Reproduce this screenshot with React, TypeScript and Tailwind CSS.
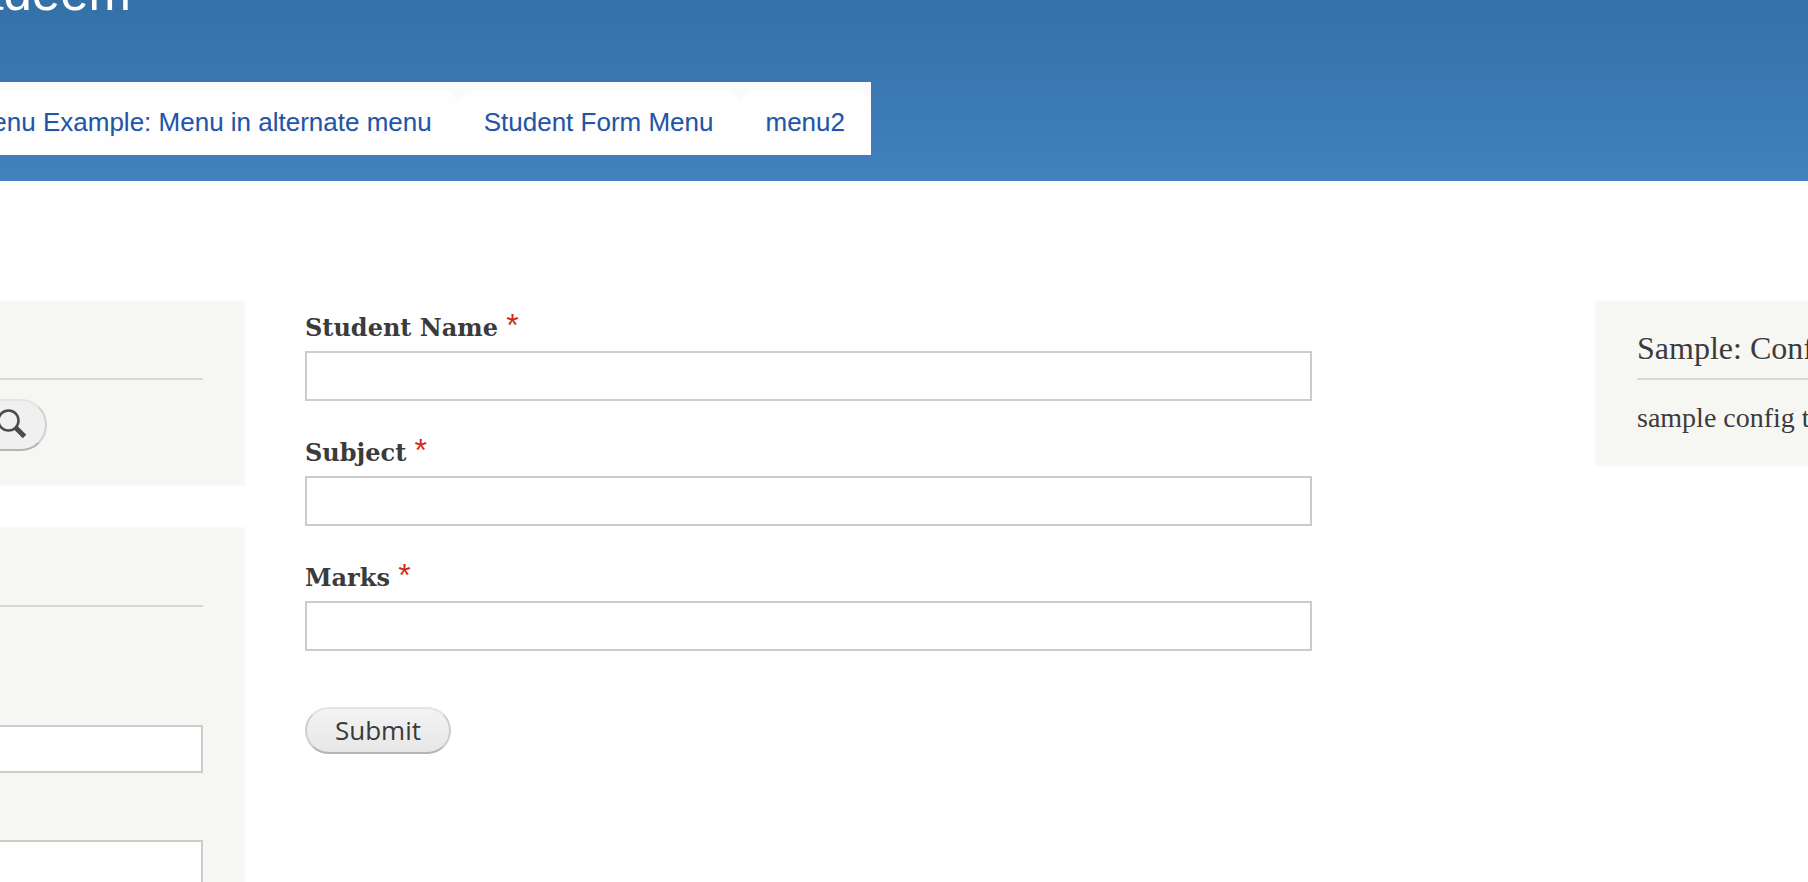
import type { FormEvent } from "react";

const fields = [
  { id: "student-name", label: "Student Name" },
  { id: "subject", label: "Subject" },
  { id: "marks", label: "Marks" },
];

const menu = [
  "Menu Example: Menu in alternate menu",
  "Student Form Menu",
  "menu2",
];

function Header() {
  return (
    <header className="h-[181px] overflow-hidden bg-linear-to-b from-[#3570a8] to-[#4081be] font-['Liberation_Sans',Arial,sans-serif]">
      <div className="flex h-[82px] w-[131px] items-start justify-end">
        <a href="#" className="-mt-9 text-[51px] leading-[58px] text-white">
          adeem
        </a>
      </div>
      <nav className="flex w-[871px] justify-end bg-[#fafafa] pt-2">
        {menu.map((item) => (
          <a
            key={item}
            href="#"
            className="h-[65px] shrink-0 rounded-t-2xl bg-[#fefefe] px-[26px] text-[26px] leading-[65px] whitespace-nowrap text-[#2255a4] [text-shadow:0_1px_1px_#eef]"
          >
            {item}
          </a>
        ))}
      </nav>
    </header>
  );
}

function SearchIcon() {
  return (
    <svg width="30" height="32" viewBox="0 0 30 32" fill="none" aria-hidden="true">
      <circle cx="9.5" cy="11.5" r="10" stroke="#4b4b4b" strokeWidth="2.5" />
      <path d="M16.500 18.500l9 9" stroke="#4b4b4b" strokeWidth="5" />
    </svg>
  );
}

function LeftSidebar() {
  return (
    <aside className="w-[245px] shrink-0 space-y-[41px] overflow-hidden">
      <section className="h-[186px] border-2 border-l-0 border-[#f9f9f9] bg-[#f6f6f2] pr-10">
        <div className="h-[78px] border-b-2 border-[#d6d6d6]" />
        <button
          type="button"
          aria-label="Search"
          className="mt-[19px] -ml-7 flex h-[52px] w-[75px] items-center justify-end rounded-full border-2 border-[#d0d0d0] border-t-[#e4e4e4] border-b-[#b4b4b4] bg-[#f0f0f0] pr-4"
        >
          <SearchIcon />
        </button>
      </section>
      <section className="border-2 border-l-0 border-[#f9f9f9] bg-[#f6f6f2] pr-10 pb-10">
        <div className="h-[78px] border-b-2 border-[#d6d6d6]" />
        <input
          type="text"
          aria-label="Username"
          className="mt-[118px] block h-12 w-full border-2 border-l-0 border-[#ccc] bg-white px-2"
        />
        <input
          type="password"
          aria-label="Password"
          className="mt-[67px] block h-12 w-full border-2 border-l-0 border-[#ccc] bg-white px-2"
        />
      </section>
    </aside>
  );
}

function StudentForm() {
  const handleSubmit = (e: FormEvent) => e.preventDefault();

  return (
    <form onSubmit={handleSubmit} className="min-w-0 flex-1 pt-[9px]">
      {fields.map((f) => (
        <div key={f.id} className="mb-[33px]">
          <label
            htmlFor={f.id}
            className="block h-[42px] font-['DejaVu_Serif',Georgia,serif] text-[24px] leading-[32px] font-bold text-[#3b3b3b]"
          >
            {f.label}{" "}
            <span className="font-['Liberation_Sans',Arial,sans-serif] text-[32px] font-normal text-[#d3291c]">
              *
            </span>
          </label>
          <input
            id={f.id}
            type="text"
            required
            className="block h-[50px] w-full border-2 border-[#ccc] bg-white px-2 text-[26px]"
          />
        </div>
      ))}
      <button
        type="submit"
        className="mt-[23px] h-[47px] rounded-full border-2 border-[#cecece] border-t-[#e4e4e4] border-b-[#b4b4b4] bg-linear-to-b from-[#f3f3f3] to-[#e7e7e7] px-7 pb-0.5 font-['Open_Sans',sans-serif] text-[26px] leading-[40px] text-[#3a3a3a]"
      >
        Submit
      </button>
    </form>
  );
}

function RightSidebar() {
  return (
    <aside className="h-[166px] w-[213px] shrink-0 overflow-hidden border-2 border-r-0 border-[#f9f9f9] bg-[#f6f6f2] pl-10 whitespace-nowrap text-[#3b3b3b]">
      <h2 className="h-[78px] border-b-2 border-[#d6d6d6] pt-[26px] text-[32px] leading-[40px] [text-shadow:0_1px_0_#fff]">
        Sample: Config
      </h2>
      <p className="pt-5 text-[28px] leading-[36px]">sample config text</p>
    </aside>
  );
}

export default function App() {
  return (
    <div className="h-screen overflow-hidden bg-white font-['Liberation_Serif',Georgia,serif]">
      <Header />
      <div className="flex items-start pt-[119px]">
        <LeftSidebar />
        <main className="mr-[283px] ml-[60px] flex min-w-0 flex-1">
          <StudentForm />
        </main>
        <RightSidebar />
      </div>
    </div>
  );
}
